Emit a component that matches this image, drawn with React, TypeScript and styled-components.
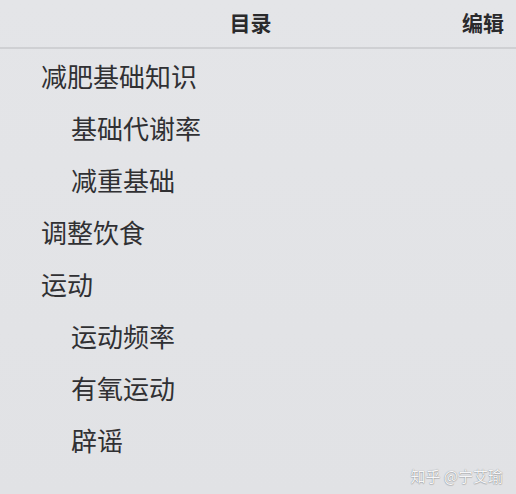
import React from "react";
import styled, { createGlobalStyle } from "styled-components";

const Global = createGlobalStyle`
  html, body { margin: 0; padding: 0; }
  body {
    background: #e2e3e6;
    font-family: "Noto Sans CJK SC", "Noto Sans", sans-serif;
  }
`;

const Page = styled.div`
  width: 516px;
  height: 494px;
  position: relative;
  overflow: hidden;
  background: linear-gradient(180deg, #e4e5e8 0%, #e1e2e5 100%);
`;

const Header = styled.header`
  height: 47px;
  display: grid;
  grid-template-columns: 1fr auto 1fr;
  align-items: center;
  border-bottom: 2px solid #cfd0d3;
  padding: 0 12px 0 12px;
`;

const Title = styled.div`
  grid-column: 2;
  font-size: 21px;
  font-weight: 700;
  color: #2a2a2c;
  line-height: 1;
  margin-top: -3px;
  margin-right: 15px;
`;

const Edit = styled.button`
  grid-column: 3;
  justify-self: end;
  background: none;
  border: none;
  padding: 0;
  font-family: inherit;
  font-size: 21px;
  font-weight: 700;
  color: #2a2a2c;
  line-height: 1;
  margin-top: -3px;
`;

const List = styled.ul`
  list-style: none;
  margin: 0;
  padding: 1px 0 0 0;
`;

const Item = styled.li<{ $level: number }>`
  height: 52px;
  display: flex;
  align-items: center;
  padding-left: ${(p) => (p.$level === 1 ? 41 : 71)}px;
  font-size: 26px;
  color: #303033;
  line-height: 1;
`;

const Watermark = styled.div`
  position: absolute;
  right: 13px;
  bottom: 11px;
  font-size: 15px;
  line-height: 1;
  color: #f6f6f8;
  text-shadow: 0 0 1px rgba(0, 0, 0, 0.45), 0 1px 1px rgba(0, 0, 0, 0.15);
`;

const items: { text: string; level: number }[] = [
  { text: "减肥基础知识", level: 1 },
  { text: "基础代谢率", level: 2 },
  { text: "减重基础", level: 2 },
  { text: "调整饮食", level: 1 },
  { text: "运动", level: 1 },
  { text: "运动频率", level: 2 },
  { text: "有氧运动", level: 2 },
  { text: "辟谣", level: 2 },
];

export default function App() {
  return (
    <>
      <Global />
      <Page>
        <Header>
          <Title>目录</Title>
          <Edit>编辑</Edit>
        </Header>
        <List>
          {items.map((it) => (
            <Item key={it.text} $level={it.level}>
              {it.text}
            </Item>
          ))}
        </List>
        <Watermark>知乎 @宁艾瑜</Watermark>
      </Page>
    </>
  );
}
